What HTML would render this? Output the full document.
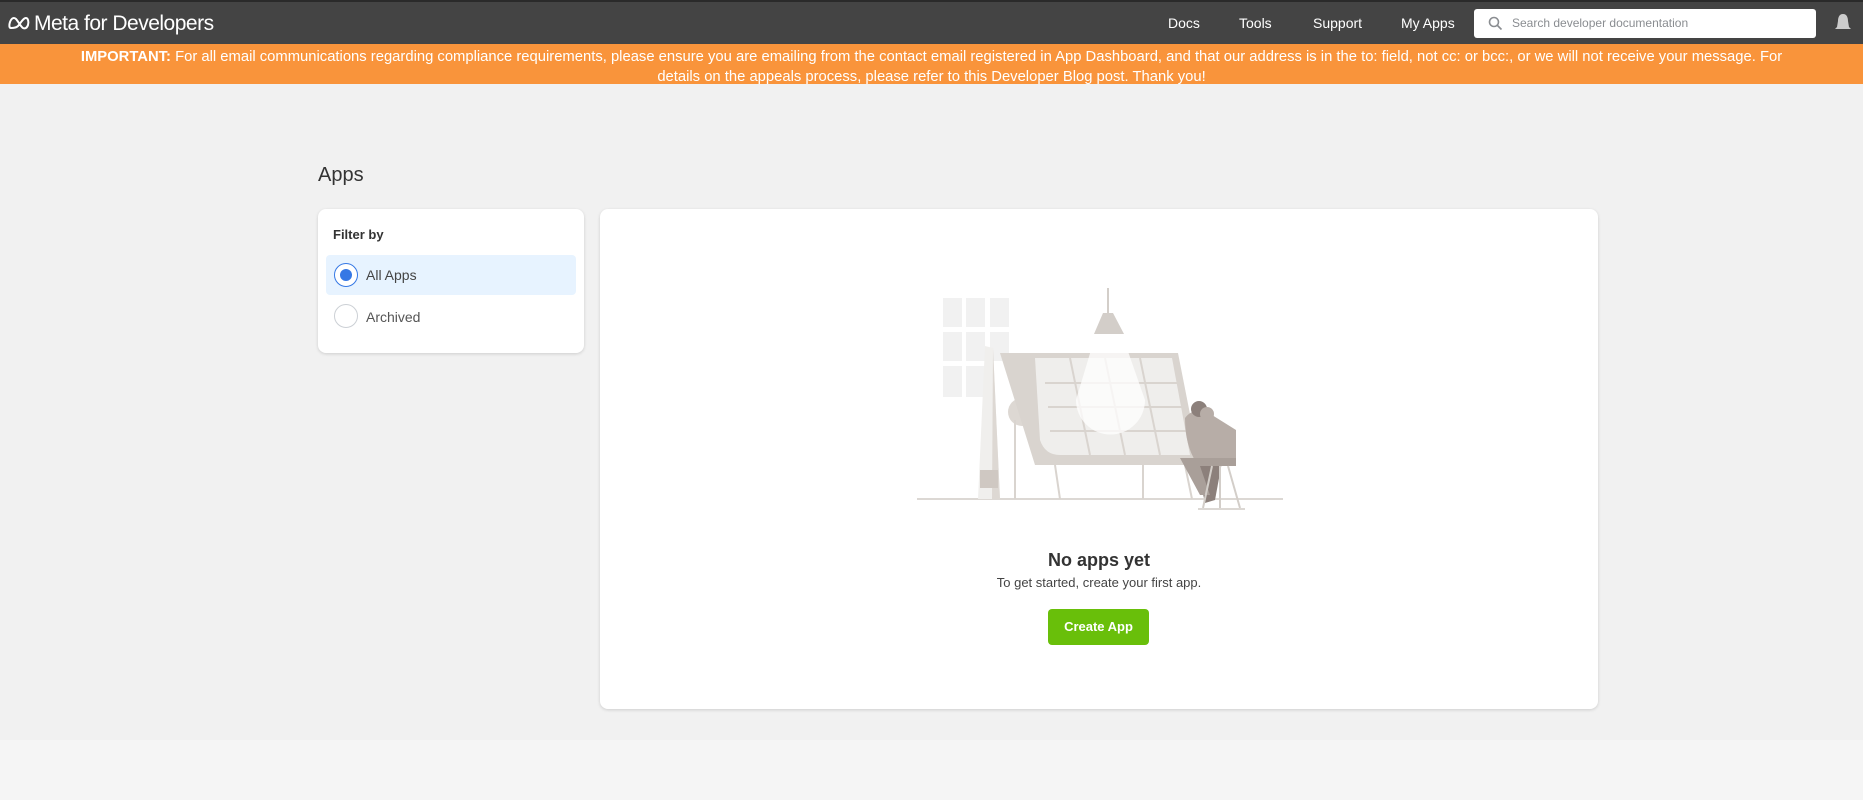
<!DOCTYPE html>
<html><head><meta charset="utf-8"><style>
*{margin:0;padding:0;box-sizing:border-box}
body{width:1863px;height:800px;background:#f5f5f5;font-family:"Liberation Sans",Arial,sans-serif;position:relative;overflow:hidden}
.hdr{position:absolute;left:0;top:0;width:1863px;height:44px;background:#444;border-top:2px solid #2a2a2a}
.logo{position:absolute;left:8px;top:10px;color:#fff;font-size:21px;letter-spacing:-0.5px}
.nav{position:absolute;top:13px;color:#fff;font-size:14px}
.search{position:absolute;left:1474px;top:7px;width:342px;height:29px;background:#fff;border-radius:3px}
.search span{position:absolute;left:38px;top:7px;font-size:12px;color:#8a8d91}
.banner{position:absolute;left:0;top:44px;width:1863px;height:40px;background:#f9943b;color:#fff;font-size:14.8px;line-height:20px;text-align:center;padding:3px 0 0;white-space:nowrap}
.gray{position:absolute;left:0;top:84px;width:1863px;height:656px;background:#f1f1f1}
.title{position:absolute;left:318px;top:164px;font-size:20px;color:#333}
.card{position:absolute;background:#fff;border-radius:8px;box-shadow:0 1px 3px rgba(0,0,0,.15)}
.radio{position:absolute;width:24px;height:24px;border-radius:50%;border:1px solid #ccd0d5;background:#fff}
</style></head><body>
<div class="hdr">
<div class="logo"><svg width="26" height="16" viewBox="0 0 26 16" style="vertical-align:-1px"><path d="M3 13C1 13 1 10 2 7C3.5 3 6 2 8 4C10 6 13 12 15 13C17 14 19 13 20 10C21 7 20 3 18 3C15 3 12 9 10 11C8 13 5 13 3 13Z" fill="none" stroke="#fff" stroke-width="2"/></svg>Meta for Developers</div>
<div class="nav" style="left:1168px">Docs</div>
<div class="nav" style="left:1239px">Tools</div>
<div class="nav" style="left:1313px">Support</div>
<div class="nav" style="left:1401px">My Apps</div>
<div class="search"><svg style="position:absolute;left:14px;top:7px" width="15" height="15" viewBox="0 0 15 15"><circle cx="6" cy="6" r="4.5" fill="none" stroke="#8a8d91" stroke-width="1.6"/><path d="M9.5 9.5L13.5 13.5" stroke="#8a8d91" stroke-width="1.6"/></svg><span>Search developer documentation</span></div>
<svg style="position:absolute;left:1834px;top:11px" width="18" height="20" viewBox="0 0 18 20"><path d="M9 1C5 1 4 5 4 8L3 14L1 16H17L15 14L14 8C14 5 13 1 9 1Z" fill="#ccc"/></svg>
</div>
<div class="banner"><b>IMPORTANT:</b> For all email communications regarding compliance requirements, please ensure you are emailing from the contact email registered in App Dashboard, and that our address is in the to: field, not cc: or bcc:, or we will not receive your message. For<br>details on the appeals process, please refer to <span style="border-bottom:1px solid #fff">this Developer Blog post</span>. Thank you!</div>
<div class="gray"></div>
<div class="title">Apps</div>
<div class="card" style="left:318px;top:209px;width:266px;height:144px">
<div style="position:absolute;left:15px;top:18px;font-size:13px;font-weight:bold;color:#333">Filter by</div>
<div style="position:absolute;left:8px;top:46px;width:250px;height:40px;background:#e7f3ff;border-radius:4px"></div>
<div class="radio" style="left:16px;top:54px;border:1.5px solid #3578e5"><div style="position:absolute;left:4.5px;top:4.5px;width:12px;height:12px;border-radius:50%;background:#3578e5"></div></div>
<div style="position:absolute;left:48px;top:58px;font-size:14px;color:#444">All Apps</div>
<div class="radio" style="left:16px;top:95px"></div>
<div style="position:absolute;left:48px;top:100px;font-size:14px;color:#555">Archived</div>
</div>
<div class="card" style="left:600px;top:209px;width:998px;height:500px">
<svg style="position:absolute;left:310px;top:75px" width="380" height="240" viewBox="910 284 380 240">
<g fill="#f1f1f1"><rect x="943" y="298" width="19" height="29"/><rect x="966" y="298" width="19" height="29"/><rect x="990" y="298" width="19" height="29"/><rect x="943" y="332" width="19" height="29"/><rect x="966" y="332" width="19" height="29"/><rect x="990" y="332" width="19" height="29"/><rect x="943" y="366" width="19" height="31"/><rect x="966" y="366" width="19" height="31"/></g>
<line x1="917" y1="499" x2="1283" y2="499" stroke="#dcd8d4" stroke-width="2"/>
<path d="M985 346L993 348L1000 499H978Z" fill="#f0efed"/><path d="M993 348L1000 499H992Z" fill="#ddd8d3"/><path d="M980 470H998V488H980Z" fill="#cfc8c2"/>
<circle cx="1022" cy="412" r="14" fill="#ddd8d3"/>
<path d="M1000 353L1178 353L1200 465L1035 465Z" fill="#d9d4cf"/>
<path d="M1035 358L1172 358L1190 455L1060 455Q1045 455 1040 440Z" fill="#efeeec"/>
<g stroke="#d9d4cf" stroke-width="2"><line x1="1045" y1="383" x2="1180" y2="383"/><line x1="1048" y1="407" x2="1184" y2="407"/><line x1="1050" y1="431" x2="1188" y2="431"/><line x1="1070" y1="358" x2="1090" y2="455"/><line x1="1105" y1="358" x2="1125" y2="455"/><line x1="1140" y1="358" x2="1160" y2="455"/></g>
<g stroke="#d9d4cf" stroke-width="2"><line x1="1015" y1="420" x2="1015" y2="499"/><line x1="1055" y1="465" x2="1060" y2="499"/><line x1="1143" y1="465" x2="1143" y2="499"/><line x1="1185" y1="465" x2="1192" y2="499"/></g>
<line x1="1108" y1="288" x2="1108" y2="314" stroke="#d3cec9" stroke-width="2"/>
<path d="M1103 313H1113L1124 334H1094Z" fill="#d3cec9"/>
<path d="M1094 340H1124L1145 400A33 33 0 1 1 1076 400Z" fill="#fff" opacity=".75"/>
<path d="M1196 462L1222 462L1215 500L1205 503Z" fill="#8c807b"/>
<path d="M1185 418Q1195 405 1212 415L1236 430L1236 458L1196 462Q1185 445 1185 418Z" fill="#b7ada7"/>
<path d="M1180 458H1236V466H1200L1210 495H1200Z" fill="#a99f99"/>
<circle cx="1199" cy="409" r="8" fill="#8c807b"/><circle cx="1207" cy="414" r="7" fill="#b7ada7"/>
<g stroke="#d3cec9" stroke-width="2"><line x1="1212" y1="466" x2="1203" y2="508"/><line x1="1228" y1="466" x2="1240" y2="508"/><line x1="1220" y1="466" x2="1220" y2="508"/></g>
<line x1="1198" y1="509" x2="1245" y2="509" stroke="#dcd8d4" stroke-width="2"/>
</svg>
<div style="position:absolute;left:0;width:100%;top:341px;text-align:center;font-size:18px;font-weight:bold;color:#333">No apps yet</div>
<div style="position:absolute;left:0;width:100%;top:366px;text-align:center;font-size:13px;color:#444">To get started, create your first app.</div>
<div style="position:absolute;left:448px;top:400px;width:101px;height:36px;background:#69bf0a;border-radius:4px;color:#fff;font-weight:bold;font-size:13px;text-align:center;line-height:36px">Create App</div>
</div>
</body></html>
